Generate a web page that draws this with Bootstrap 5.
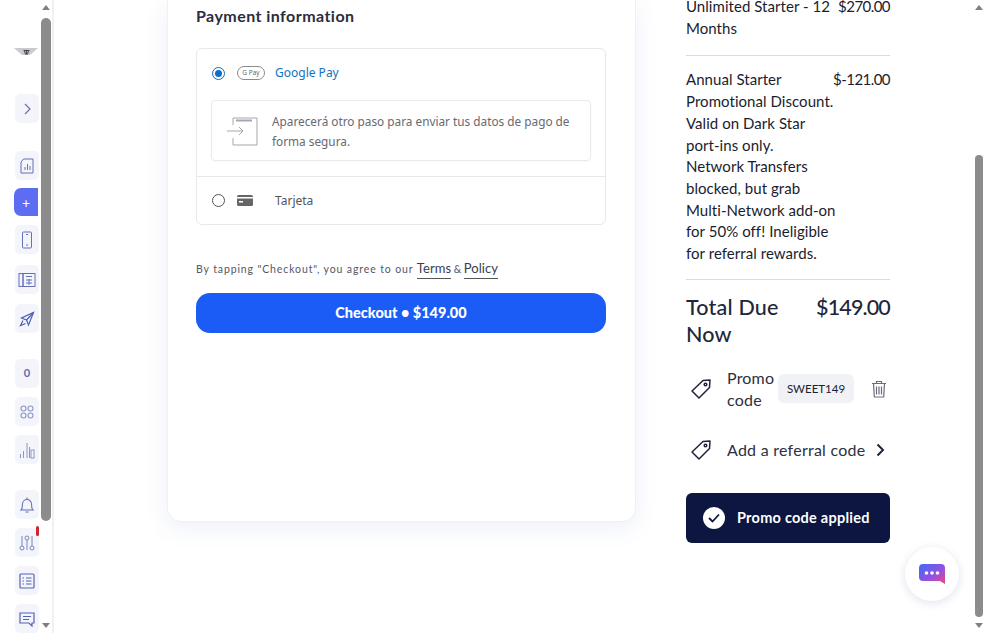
<!DOCTYPE html>
<html lang="en"><head><meta charset="utf-8"><title>Checkout</title>
<link rel="stylesheet" href="https://cdn.jsdelivr.net/npm/bootstrap@5.3.0/dist/css/bootstrap.min.css">
<style>
html,body{height:633px;overflow:hidden;background:#fff}
body{font-family:"Lato","Liberation Sans",sans-serif;color:#1a1d2e}
.shell{height:633px;position:relative}
.side{width:54px;height:633px;border-right:2px solid #f0f1f4;padding-top:38px;overflow:hidden;flex:none}
.logo-box{height:26px;padding-left:14px;margin-bottom:32px}
.tile{width:24px;height:29px;margin-left:15px;margin-bottom:9px;background:#f3f5fb;border-radius:5px;display:flex;align-items:center;justify-content:center;color:#5f69b5;font-size:11px;font-weight:700;flex:none}
.tile.on{background:#5c6df2;color:#fff;border-radius:7px 0 0 7px;width:24px;margin-left:14px;height:28px;font-size:14px;font-weight:400}
.tile.first{margin-bottom:0}
.tile.tight{margin-bottom:8px}
.tile.wide-gap{margin-bottom:10px}
.tile.wider-gap{margin-bottom:11px}
.rule{height:1px;background:#e6e8ec;margin:14px 14px 14px 0;width:39px}
.rule.r2{margin-top:3px;margin-bottom:14px}
.dot-red{position:absolute;left:36px;top:526px;width:3px;height:10px;background:#d3222f;border-radius:2px}
.track-l{position:absolute;left:41px;top:18px;width:10px;height:503px;background:#8c8c8c;border-radius:5px}
.arr{position:absolute;width:0;height:0;border-left:4px solid transparent;border-right:4px solid transparent}
.arr.up{border-bottom:5px solid #808080}.arr.dn{border-top:5px solid #808080}
.track-r{position:absolute;left:975px;top:155px;width:8px;height:462px;background:#8c8c8c;border-radius:5px}
.sheet{width:469px;height:522px;margin-left:113px;background:#fff;border:1px solid #eef0f4;border-top:0;border-radius:0 0 14px 14px;box-shadow:0 6px 24px rgba(60,90,180,.09);padding:6px 29px 0 28px;flex:none}
.pay-title{font-size:16px;font-weight:700;color:#2a2d3c;line-height:20px;margin:0 0 22px;letter-spacing:.45px}
.pay-box{border:1px solid #e6e8ec;border-radius:6px;height:177px;width:410px}
.pay-row{height:48px;padding:0 15px;font-family:"Noto Sans","Open Sans",sans-serif;font-size:12px}
.radio-mark{width:13px;height:13px;border-radius:50%;border:1px solid #555;flex:none;margin-right:12px}
.radio-mark.sel{border:1.5px solid #0f6fc5;position:relative}
.radio-mark.sel::after{content:"";position:absolute;inset:2px;border-radius:50%;background:#0f6fc5}
.gp-pill{width:28px;height:14px;border:1px solid #8a8a8a;border-radius:7px;font-size:6.5px;line-height:12px;text-align:center;color:#666;margin-right:10px;flex:none}
.gp-name{color:#1273c4}
.note-box{height:61px;margin:3px 14px 0 14px;border:1px solid #e8eaee;border-radius:4px;box-shadow:0 1px 2px rgba(0,0,0,.03);padding:0 12px 0 14px;gap:14px;font-family:"Noto Sans","Open Sans",sans-serif;font-size:11.8px;line-height:20px;color:#666a70}
.card-row{border-top:1px solid #e6e8ec;height:48px;margin-top:15px;padding:0 15px;font-family:"Noto Sans","Open Sans",sans-serif;font-size:12px;color:#555}
.card-ic{margin-right:22px;flex:none}
.legal{margin-top:33px;font-size:10.5px;letter-spacing:.88px;color:#555867;line-height:20px;height:20px}
.legal-link{font-size:13px;color:#3a3d4c;border-bottom:1px solid #555;padding-bottom:2px;letter-spacing:.1px}
.legal-amp{letter-spacing:-.2px}
.go-btn{display:block;width:410px;height:40px;margin-top:15px;background:#1a5cf5;border:0;border-radius:14px;color:#fff;font-weight:900;font-size:14.5px;line-height:38px;text-align:center}
.summary{width:204px;margin-left:50px;flex:none;font-size:15px;line-height:21.7px;color:#1a1d2e;letter-spacing:.05px;margin-top:-4px}
.sum-text{white-space:nowrap;width:130px;flex:none}
.sum-price{white-space:nowrap;letter-spacing:-.55px}
.sum-rule{height:1px;background:#d9dbde;margin:16px 0 13px}
.sum-rule.after{margin:14px 0 14px}
.total{font-size:21.5px;line-height:27px;font-weight:500;color:#20263a;letter-spacing:.2px}
.total-price{letter-spacing:-.85px}
.promo{margin-top:19px;height:44px;font-size:16px;line-height:22px;color:#2d3040;letter-spacing:.2px}
.ref{margin-top:17px;height:44px;font-size:16px;color:#2d3040;letter-spacing:.25px}
.promo-label{width:50px;flex:none}
.code-chip{background:#f1f2f5;border-radius:6px;width:76px;height:29px;font-size:11.5px;line-height:29px;text-align:center;color:#1a2036;font-weight:400;margin-left:1px;flex:none;letter-spacing:0}
.tag-ic{width:26px;margin-right:15px;flex:none}
.end-gap-s{width:3px;flex:none}
.end-gap-m{width:5px;flex:none}
.applied{margin-top:21px;height:50px;background:#0c1640;border-radius:6px;color:#fff;font-weight:700;font-size:14.5px;padding-left:17px;gap:12px;letter-spacing:.25px}
.tick{width:22px;height:22px;border-radius:50%;background:#fff;flex:none}
.chat{position:absolute;left:905px;top:547px;width:54px;height:54px;border-radius:50%;background:#fff;box-shadow:0 2px 10px rgba(70,80,140,.16)}
</style></head><body>
<div class="shell d-flex">
 <nav class="side d-flex flex-column">
  <div class="logo-box"><svg width="24" height="14" viewBox="0 0 24 14"><path d="M0 3h24l-8 7H8z" fill="#c9cbd0"/><path d="M9.500 5.500h6M10.500 5.500l1 4M12.500 5.500v4M14.500 5.500l-1 4" stroke="#444" stroke-width="1" fill="none"/></svg></div>
  <div class="tile first"><svg width="12" height="14" viewBox="0 0 12 14" fill="none" stroke="#6570b8" stroke-width="1.2"><path d="M4 2l5 5-5 5"/></svg></div>
  <div class="rule"></div>
  <div class="tile tight"><svg width="14" height="16" viewBox="0 0 14 16" fill="none" stroke="#6570b8"><path d="M3.500 1h9.500v14H1V4z"/><path d="M5 12V9M7.500 12V6M10 12V8" /></svg></div>
  <div class="tile on">+</div>
  <div class="tile wider-gap"><svg width="12" height="18" viewBox="0 0 12 18" fill="none" stroke="#6570b8"><rect x="1.500" y="1" width="9" height="16" rx="1"/><path d="M5 3.500h2M5 14h2"/></svg></div>
  <div class="tile wide-gap"><svg width="18" height="16" viewBox="0 0 18 16" fill="none" stroke="#6570b8"><rect x="1" y="1.500" width="4" height="13"/><rect x="5" y="1.500" width="12" height="13"/><path d="M8 4.500h6M8 8h6M8 11h6M11 7v6"/></svg></div>
  <div class="tile"><svg width="16" height="16" viewBox="0 0 16 16" fill="none" stroke="#4f5db5" stroke-width="1.200"><path d="M14.500 1.500 9.500 14l-2-5-5-2z"/><path d="M14.500 1.500 7.500 9M4 9.500l-2.500 5 5-2"/></svg></div>
  <div class="rule r2"></div>
  <div class="tile">0</div>
  <div class="tile"><svg width="16" height="16" viewBox="0 0 16 16" fill="none" stroke="#8d95c8" stroke-width="1.100"><circle cx="4.500" cy="4.500" r="2.500"/><circle cx="11.500" cy="4.500" r="2.500"/><circle cx="4.500" cy="11.500" r="2.500"/><circle cx="11.500" cy="11.500" r="2.500"/></svg></div>
  <div class="tile"><svg width="16" height="18" viewBox="0 0 16 18" fill="none" stroke="#8d95c8"><path d="M1.500 17v-4M4.500 17v-7M8 17V2M10.500 17V6"/><rect x="12" y="9" width="3" height="8"/></svg></div>
  <div class="rule r2"></div>
  <div class="tile"><svg width="16" height="18" viewBox="0 0 16 18" fill="none" stroke="#6570b8" stroke-width="1.100"><path d="M2 14c1.500-1.500 1.500-3 1.500-6a4.500 4.500 0 0 1 9 0c0 3 0 4.500 1.500 6z"/><path d="M6.500 16h3M8 1.500v2"/></svg></div>
  <div class="tile"><svg width="16" height="20" viewBox="0 0 16 20" fill="none" stroke="#7a84c0"><circle cx="8" cy="5" r="2"/><circle cx="3" cy="15" r="2"/><circle cx="13" cy="15" r="2"/><path d="M3 3v10M8 7v10M13 3v10"/></svg></div>
  <div class="tile"><svg width="16" height="16" viewBox="0 0 16 16" fill="none" stroke="#5563b5" stroke-width="1.200"><rect x="1" y="1" width="14" height="14" rx="1"/><path d="M3.500 5h1.500M7 5h5.500M3.500 8h1.500M7 8h5.500M3.500 11h1.500M7 11h5.500"/></svg></div>
  <div class="tile"><svg width="16" height="16" viewBox="0 0 16 16" fill="none" stroke="#5563b5" stroke-width="1.200"><path d="M1 2h14v10h-2v3l-3-3H1z"/><path d="M4 5.500h8M4 8.500h6"/></svg></div>
 </nav>
 <main class="sheet">
  <h2 class="pay-title">Payment information</h2>
  <div class="pay-box">
   <div class="pay-row d-flex align-items-center"><span class="radio-mark sel"></span><span class="gp-pill">G Pay</span><span class="gp-name">Google Pay</span></div>
   <div class="note-box d-flex align-items-center">
    <svg width="32" height="32" viewBox="0 0 32 32" fill="none" stroke="#a4a7ad" class="flex-shrink-0"><path d="M7 10V3h24v27H7v-7"/><path d="M10 5.500h16" stroke-width="2"/><path d="M1 16h16M13 12l4 4-4 4"/></svg>
    <div>Aparecerá otro paso para enviar tus datos de pago de forma segura.</div>
   </div>
   <div class="card-row d-flex align-items-center"><span class="radio-mark"></span><svg width="16" height="11" viewBox="0 0 16 11" class="card-ic"><rect width="16" height="11" rx="1.500" fill="#666"/><rect y="2" width="16" height="1.500" fill="#fff"/><rect x="2" y="6" width="4" height="1.500" fill="#fff"/></svg><span>Tarjeta</span></div>
  </div>
  <div class="legal">By tapping "Checkout", you agree to our <span class="legal-link">Terms</span><span class="legal-amp"> &amp; </span><span class="legal-link">Policy</span></div>
  <button type="button" class="go-btn">Checkout • $149.00</button>
 </main>
 <aside class="summary">
  <div class="d-flex justify-content-between"><div class="sum-text">Unlimited Starter - 12<br>Months</div><div class="sum-price">$270.00</div></div>
  <div class="sum-rule"></div>
  <div class="d-flex justify-content-between"><div class="sum-text">Annual Starter<br>Promotional Discount.<br>Valid on Dark Star<br>port-ins only.<br>Network Transfers<br>blocked, but grab<br>Multi-Network add-on<br>for 50% off! Ineligible<br>for referral rewards.</div><div class="sum-price">$-121.00</div></div>
  <div class="sum-rule after"></div>
  <div class="d-flex justify-content-between total"><div>Total Due<br>Now</div><div class="total-price">$149.00</div></div>
  <div class="promo d-flex align-items-center">
   <svg class="tag-ic" width="24" height="24" viewBox="-2 0 24 24" fill="none" stroke="#20233a" stroke-width="1.500"><path d="M3 14 14 3.500l7-.5-.5 7.500L10 21z" stroke-linejoin="round"/><circle cx="16.500" cy="7.500" r="1.300"/></svg>
   <div class="promo-label">Promo code</div>
   <div class="code-chip">SWEET149</div>
   <svg class="ms-auto" width="16" height="18" viewBox="0 0 16 18" fill="none" stroke="#6a6d7c" stroke-width="1.200"><path d="M1 3.500h14M5.500 3.500V1.500h5v2M2.500 3.500l.8 13.500h9.400l.8-13.500M5.500 6.500v8M8 6.500v8M10.500 6.500v8"/></svg>
   <span class="end-gap-s"></span>
  </div>
  <div class="ref d-flex align-items-center">
   <svg class="tag-ic" width="24" height="24" viewBox="-2 0 24 24" fill="none" stroke="#20233a" stroke-width="1.500"><path d="M3 14 14 3.500l7-.5-.5 7.500L10 21z" stroke-linejoin="round"/><circle cx="16.500" cy="7.500" r="1.300"/></svg>
   <div>Add a referral code</div>
   <svg class="ms-auto" width="9" height="14" viewBox="0 0 9 14" fill="none" stroke="#20233a" stroke-width="2"><path d="M1.500 1.500 7 7l-5.500 5.500"/></svg>
   <span class="end-gap-m"></span>
  </div>
  <div class="applied d-flex align-items-center"><span class="tick d-flex align-items-center justify-content-center"><svg width="12" height="10" viewBox="0 0 12 10" fill="none" stroke="#0c1640" stroke-width="1.800"><path d="M1 5l3.500 3.500L11 1.500"/></svg></span><span>Promo code applied</span></div>
 </aside>
 <div class="track-l"></div><div class="arr up" style="left:42px;top:5px"></div><div class="arr dn" style="left:42px;top:623px"></div>
 <div class="dot-red"></div>
 <div class="track-r"></div><div class="arr up" style="left:975px;top:5px"></div><div class="arr dn" style="left:975px;top:623px"></div>
 <div class="chat d-flex align-items-center justify-content-center"><svg width="26" height="20" viewBox="0 0 26 20"><defs><linearGradient id="cg" x1="0" y1="0" x2="1" y2="1"><stop offset="0" stop-color="#3d6cf5"/><stop offset=".6" stop-color="#9a4fe0"/><stop offset="1" stop-color="#f0486a"/></linearGradient></defs><path d="M4 0h18a4 4 0 0 1 4 4v16l-5-3H4a4 4 0 0 1-4-4V4a4 4 0 0 1 4-4z" fill="url(#cg)"/><circle cx="7.500" cy="9" r="1.800" fill="#fff"/><circle cx="13" cy="9" r="1.800" fill="#fff"/><circle cx="18.500" cy="9" r="1.800" fill="#fff"/></svg></div>
</div>
<script src="https://cdn.jsdelivr.net/npm/bootstrap@5.3.0/dist/js/bootstrap.bundle.min.js"></script>
</body></html>
